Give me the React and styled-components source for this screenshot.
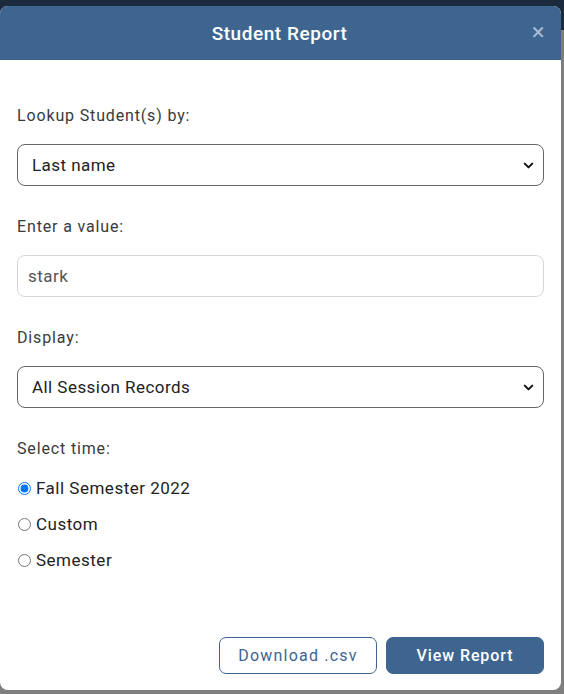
import React from "react";
import styled, { createGlobalStyle } from "styled-components";
import { ChevronDown } from "lucide-react";

const GlobalStyle = createGlobalStyle`
	html, body {
		margin: 0;
		padding: 0;
	}
	body {
		font-family: Roboto, "Liberation Sans", sans-serif;
		background: #7f7f7f;
	}
`;

const Backdrop = styled.div`
	width: 564px;
	height: 694px;
	background: linear-gradient(#1c2a3e 0 30px, #7f7f7f 30px);
	padding-top: 6px;
	box-sizing: border-box;
`;

const Modal = styled.div`
	width: 561px;
	height: 684px;
	background: #fff;
	border-radius: 8px;
	overflow: hidden;
	display: flex;
	flex-direction: column;
`;

const Header = styled.div`
	height: 54px;
	background: #3e6590;
	display: flex;
	align-items: center;
	justify-content: center;
	position: relative;
	color: #fff;
	font-size: 19px;
	font-weight: 500;
	letter-spacing: 0.55px;
	padding-right: 2px;
`;

const Close = styled.span`
	position: absolute;
	right: 16px;
	top: 14px;
	font-size: 24px;
	line-height: 24px;
	color: #a9bbd0;
	font-weight: 400;
`;

const Body = styled.div`
	flex: 1;
	padding: 46px 17px 0 17px;
	display: flex;
	flex-direction: column;
`;

const Label = styled.div`
	font-size: 16px;
	color: #3a3a3a;
	line-height: 20px;
	letter-spacing: 0.85px;
	margin-bottom: 18px;
`;

const Field = styled.div`
	position: relative;
	margin-bottom: 31px;
`;

const Select = styled.select`
	appearance: none;
	width: 100%;
	height: 42px;
	border: 1px solid #666;
	border-radius: 8px;
	background: #fff;
	font-family: inherit;
	font-size: 17px;
	letter-spacing: 0.45px;
	color: #222;
	padding: 0 14px;
	outline: none;
`;

const Arrow = styled.span`
	position: absolute;
	right: 8px;
	top: 14px;
	display: flex;
	color: #111;
	pointer-events: none;
`;

const Input = styled.input`
	width: 100%;
	height: 42px;
	box-sizing: border-box;
	border: 1px solid #d4d8dd;
	border-radius: 8px;
	font-family: inherit;
	font-size: 17px;
	letter-spacing: 0.45px;
	color: #555;
	padding: 0 10px;
	outline: none;
`;

const Radios = styled.div`
	display: flex;
	flex-direction: column;
	gap: 14px;
`;

const RadioRow = styled.label`
	display: flex;
	align-items: center;
	font-size: 17px;
	letter-spacing: 0.5px;
	color: #222;
	line-height: 22px;

	input {
		margin: 0 5px 0 1px;
		width: 13px;
		height: 13px;
	}
`;

const Footer = styled.div`
	display: flex;
	justify-content: flex-end;
	gap: 9px;
	padding: 0 17px 16px 0;
`;

const Button = styled.button`
	width: 158px;
	height: 37px;
	border-radius: 7px;
	font-family: inherit;
	font-size: 16px;
	letter-spacing: ${(p) => (p.$primary ? "0.9px" : "1.2px")};
	font-weight: ${(p) => (p.$primary ? 500 : 400)};
	border: 1px solid #3e6590;
	background: ${(p) => (p.$primary ? "#3e6590" : "#fff")};
	color: ${(p) => (p.$primary ? "#fff" : "#3e6590")};
`;

const SelectField = ({ value, options }) => (
	<Field>
		<Select defaultValue={value}>
			{options.map((o) => (
				<option key={o}>{o}</option>
			))}
		</Select>
		<Arrow>
			<ChevronDown size={15} strokeWidth={3.2} />
		</Arrow>
	</Field>
);

const times = ["Fall Semester 2022", "Custom", "Semester"];

export default function App() {
	return (
		<>
			<GlobalStyle />
			<Backdrop>
				<Modal>
					<Header>
						Student Report
						<Close>×</Close>
					</Header>
					<Body>
						<Label>Lookup Student(s) by:</Label>
						<SelectField value="Last name" options={["Last name", "First name", "Student ID"]} />
						<Label>Enter a value:</Label>
						<Field>
							<Input defaultValue="stark" />
						</Field>
						<Label>Display:</Label>
						<SelectField value="All Session Records" options={["All Session Records", "Summary"]} />
						<Label>Select time:</Label>
						<Radios>
							{times.map((t, i) => (
								<RadioRow key={t}>
									<input type="radio" name="time" defaultChecked={i === 0} />
									{t}
								</RadioRow>
							))}
						</Radios>
					</Body>
					<Footer>
						<Button>Download .csv</Button>
						<Button $primary>View Report</Button>
					</Footer>
				</Modal>
			</Backdrop>
		</>
	);
}
